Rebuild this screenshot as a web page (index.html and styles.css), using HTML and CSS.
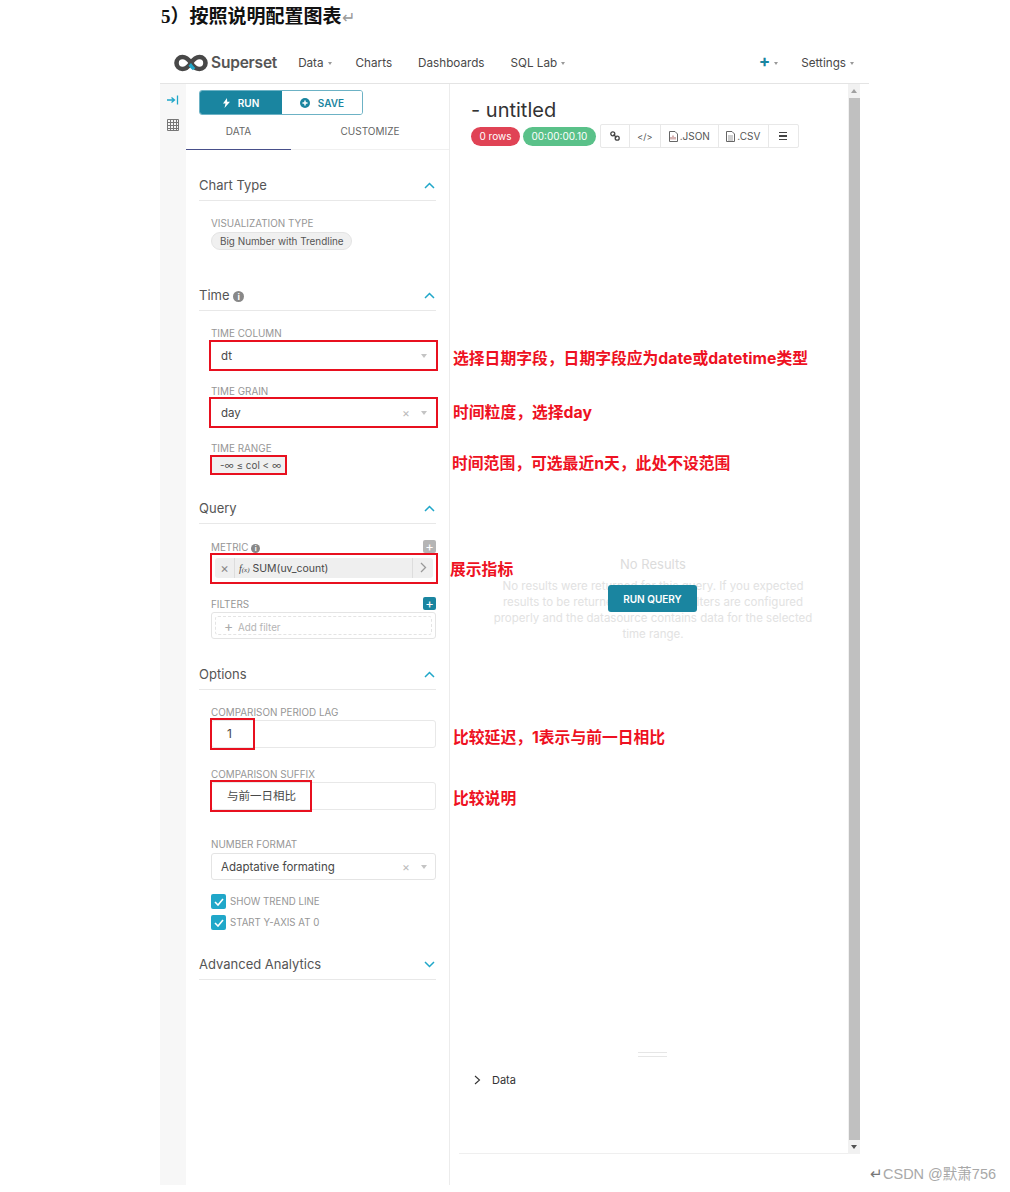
FILE: index.html
```html
<!DOCTYPE html>
<html lang="zh">
<head>
  <meta charset="UTF-8" />
  <title>按照说明配置图表</title>
  <link rel="stylesheet" href="styles.css">
</head>
<body>

  <h1 class="doc-title">5）按照说明配置图表<span class="return-mark">↵</span></h1>

  <div class="shot">
    <!-- top nav -->
    <nav class="navbar">
      <svg class="logo" width="36" height="18" viewBox="0 0 36 18">
        <path d="M18 9C15 4.500 13 3 9.500 3a6 6 0 0 0 0 12C13 15 15 13.500 18 9C21 4.500 23 3 26.500 3a6 6 0 0 1 0 12C23 15 21 13.500 18 9Z" fill="none" stroke="#484848" stroke-width="4.600"/>
        <path d="M18 9C19.500 11.200 20.800 12.800 22.300 13.900L20 16.300C18.300 15.200 17 13.700 15.500 11.800Z" fill="#20a7c9"/>
      </svg>
      <span class="brand">Superset</span>
      <a class="nav-item nav-data">Data<i class="caret"></i></a>
      <a class="nav-item">Charts</a>
      <a class="nav-item">Dashboards</a>
      <a class="nav-item">SQL Lab<i class="caret"></i></a>
      <span class="nav-space"></span>
      <a class="nav-item nav-plus"><span class="plus">+</span><i class="caret"></i></a>
      <a class="nav-item">Settings<i class="caret"></i></a>
    </nav>

    <div class="explore">
      <!-- narrow strip -->
      <aside class="strip">
        <svg width="12" height="10" viewBox="0 0 12 10"><path d="M0 5h7M4.500 2.500L7.500 5l-3 2.500M10.500 0.500v9" fill="none" stroke="#20a7c9" stroke-width="1.300"/></svg>
        <svg width="12" height="12" viewBox="0 0 12 12"><path d="M.5.500h11v11H.5zM.5 3.500h11M.5 6.500h11M.5 9.500h11M3.500.500v11M6.500.500v11M9.500.500v11" fill="none" stroke="#777" stroke-width="1"/></svg>
      </aside>

      <!-- control panel -->
      <section class="panel">
        <div class="run-save">
          <button class="btn-run">
            <svg width="7" height="10" viewBox="0 0 7 10"><path d="M4 0L0 5.500h2.500L1.500 10 7 3.800H4.200Z" fill="#fff"/></svg>
            RUN
          </button>
          <button class="btn-save">
            <svg width="10" height="10" viewBox="0 0 10 10"><circle cx="5" cy="5" r="5" fill="#1a85a0"/><path d="M2.500 5h5M5 2.500v5" stroke="#fff" stroke-width="1.500"/></svg>
            SAVE
          </button>
        </div>
        <div class="tabs">
          <div class="tab tab-active">DATA</div>
          <div class="tab">CUSTOMIZE</div>
        </div>

        <div class="section-head head-chart">Chart Type
          <svg class="chev" width="11" height="7" viewBox="0 0 11 7"><path d="M1 6l4.500-4.500L10 6" fill="none" stroke="#20a7c9" stroke-width="1.500"/></svg>
        </div>
        <div class="fields">
          <div class="label label-viz">VISUALIZATION TYPE</div>
          <span class="pill pill-viz">Big Number with Trendline</span>
        </div>

        <div class="section-head head-time">Time <i class="info info-big">i</i>
          <svg class="chev" width="11" height="7" viewBox="0 0 11 7"><path d="M1 6l4.500-4.500L10 6" fill="none" stroke="#20a7c9" stroke-width="1.500"/></svg>
        </div>
        <div class="fields">
          <div class="label label-first">TIME COLUMN</div>
          <div class="select marked">dt<i class="select-arrow"></i>
            <span class="note note-column">选择日期字段，日期字段应为date或datetime类型</span>
          </div>
          <div class="label label-next">TIME GRAIN</div>
          <div class="select marked">day<span class="select-x">×</span><i class="select-arrow"></i>
            <span class="note note-grain">时间粒度，选择day</span>
          </div>
          <div class="label label-range">TIME RANGE</div>
          <span class="pill pill-range marked">-∞ ≤ col &lt; ∞
            <span class="note note-range">时间范围，可选最近n天，此处不设范围</span>
          </span>
        </div>

        <div class="section-head head-query">Query
          <svg class="chev" width="11" height="7" viewBox="0 0 11 7"><path d="M1 6l4.500-4.500L10 6" fill="none" stroke="#20a7c9" stroke-width="1.500"/></svg>
        </div>
        <div class="fields">
          <div class="label label-add label-metric">METRIC <i class="info">i</i><span class="add add-grey">+</span></div>
          <div class="metric-box marked">
            <div class="metric">
              <span class="metric-x">×</span>
              <span class="metric-name"><em class="fx">f<small>(x)</small></em> SUM(uv_count)</span>
              <svg class="metric-go" width="7" height="11" viewBox="0 0 7 11"><path d="M1 1l4.500 4.500L1 10" fill="none" stroke="#999" stroke-width="1.300"/></svg>
            </div>
            <span class="note note-metric">展示指标</span>
          </div>
          <div class="label label-add label-filters">FILTERS<span class="add">+</span></div>
          <div class="filter-box">
            <div class="filter-inner"><span class="filter-plus">+</span> Add filter</div>
          </div>
        </div>

        <div class="section-head head-options">Options
          <svg class="chev" width="11" height="7" viewBox="0 0 11 7"><path d="M1 6l4.500-4.500L10 6" fill="none" stroke="#20a7c9" stroke-width="1.500"/></svg>
        </div>
        <div class="fields">
          <div class="label label-lag">COMPARISON PERIOD LAG</div>
          <div class="input">
            <span class="input-mark input-mark-lag">1</span>
            <span class="note note-lag">比较延迟，1表示与前一日相比</span>
          </div>
          <div class="label label-suffix">COMPARISON SUFFIX</div>
          <div class="input">
            <span class="input-mark input-mark-suffix">与前一日相比</span>
            <span class="note note-suffix">比较说明</span>
          </div>
          <div class="label label-format">NUMBER FORMAT</div>
          <div class="select">Adaptative formating<span class="select-x">×</span><i class="select-arrow"></i></div>
          <label class="check check-first"><i class="box"><svg width="10" height="8" viewBox="0 0 10 8"><path d="M1 4l3 3 5-6" fill="none" stroke="#fff" stroke-width="1.600"/></svg></i>SHOW TREND LINE</label>
          <label class="check"><i class="box"><svg width="10" height="8" viewBox="0 0 10 8"><path d="M1 4l3 3 5-6" fill="none" stroke="#fff" stroke-width="1.600"/></svg></i>START Y-AXIS AT 0</label>
        </div>

        <div class="section-head head-advanced">Advanced Analytics
          <svg class="chev" width="11" height="7" viewBox="0 0 11 7"><path d="M1 1l4.500 4.500L10 1" fill="none" stroke="#20a7c9" stroke-width="1.500"/></svg>
        </div>
      </section>

      <!-- chart side -->
      <section class="main">
        <div class="main-inner">
          <div class="chart-title">- untitled</div>
          <div class="chart-bar">
            <span class="badge badge-red">0 rows</span>
            <span class="badge badge-green">00:00:00.10</span>
            <div class="btn-group">
              <span class="bg-item bg-link">
                <svg width="10" height="10" viewBox="0 0 10 10"><circle cx="2.800" cy="2.800" r="2" fill="none" stroke="#444" stroke-width="1.300"/><circle cx="7.200" cy="7.200" r="2" fill="none" stroke="#444" stroke-width="1.300"/><path d="M3.500 3.500l3 3" stroke="#444" stroke-width="1.300"/></svg>
              </span>
              <span class="bg-item bg-code">&lt;/&gt;</span>
              <span class="bg-item bg-json">
                <svg width="9" height="11" viewBox="0 0 9 11"><path d="M.5.500h5.500l2.500 2.500v7.500h-8z" fill="none" stroke="#666"/><path d="M2 8.500V6M4 8.500V4.500M6 8.500V6" stroke="#a66" stroke-width="1"/></svg>
                .JSON</span>
              <span class="bg-item bg-csv">
                <svg width="9" height="11" viewBox="0 0 9 11"><path d="M.5.500h5.500l2.500 2.500v7.500h-8z" fill="none" stroke="#666"/><path d="M2 5h5M2 7h5M2 9h5" stroke="#888" stroke-width=".8"/></svg>
                .CSV</span>
              <span class="bg-item bg-menu"><i></i><i></i><i></i></span>
            </div>
          </div>

          <div class="empty">
            <div class="empty-title">No Results</div>
            <p class="empty-text">No results were returned for this query. If you expected results to be returned, ensure any filters are configured properly and the datasource contains data for the selected time range.</p>
            <button class="btn-query">RUN QUERY</button>
          </div>

          <div class="grip"></div>
          <div class="data-row">
            <svg width="7" height="10" viewBox="0 0 7 10"><path d="M1 1l4.500 4L1 9" fill="none" stroke="#333" stroke-width="1.100"/></svg>
            <span>Data</span>
          </div>
        </div>

        <div class="scrollbar">
          <span class="sb-arrow sb-up"></span>
          <div class="sb-thumb"></div>
          <span class="sb-arrow sb-down"></span>
        </div>
      </section>

      <div class="watermark"><span class="wm-return">↵</span>CSDN @默萧756</div>
    </div>
  </div>

</body>
</html>
```

FILE: styles.css
```css
html, body {
  margin: 0;
  padding: 0;
}
body {
  width: 1010px;
  height: 1192px;
  overflow: hidden;
  background: white;
  font-family: Inter, "Noto Sans CJK SC", sans-serif;
  color: #484848;
}
.doc-title {
  margin: 0;
  padding: 6px 0 0 161px;
  height: 42px;
  box-sizing: border-box;
  font-family: "Liberation Serif", "Noto Sans CJK SC", serif;
  font-size: 19px;
  line-height: 22px;
  font-weight: bold;
  color: #111;
}
.return-mark {
  font-weight: normal;
  font-size: 16px;
  color: #999;
}
.shot {
  margin-left: 160px;
  width: 709px;
}

/* top nav */
.navbar {
  height: 41px;
  border-bottom: 1px solid #e4e4e4;
  display: flex;
  align-items: center;
  padding-left: 13px;
  font-size: 11.700px;
  color: #484848;
}
.logo {
  margin-right: 2px;
}
.brand {
  font-size: 15.500px;
  font-weight: 600;
  color: #555;
  letter-spacing: -0.2px;
  margin-right: 21px;
}
.nav-item {
  margin-right: 26px;
  white-space: nowrap;
}
.nav-data {
  margin-right: 24px;
}
.nav-space {
  flex: 1;
}
.nav-plus {
  margin-right: 23px;
}
.plus {
  color: #1a85a0;
  font-weight: bold;
  font-size: 17px;
  line-height: 12px;
}
.caret {
  display: inline-block;
  margin-left: 4px;
  vertical-align: middle;
  border-top: 3px solid #999;
  border-left: 2.500px solid transparent;
  border-right: 2.500px solid transparent;
}
.nav-item:last-child {
  margin-right: 15px;
}

/* layout below nav */
.explore {
  display: flex;
  height: 1101px;
  position: relative;
}
.strip {
  width: 26px;
  background: #f7f7f7;
  display: flex;
  flex-direction: column;
  align-items: center;
  padding-top: 11px;
  box-sizing: border-box;
  gap: 14px;
}
.panel {
  width: 264px;
  border-right: 1px solid #ececec;
  box-sizing: border-box;
  padding: 0;
  position: relative;
}

/* run / save */
.run-save {
  display: flex;
  margin: 6px 0 0 13px;
  width: 164px;
  height: 25px;
  border: 1px solid #6cb2c5;
  border-radius: 3px;
  box-sizing: border-box;
  overflow: hidden;
}
.run-save button {
  border: none;
  font-family: inherit;
  font-size: 10px;
  font-weight: 600;
  display: flex;
  align-items: center;
  justify-content: center;
  gap: 8px;
  padding: 0;
}
.btn-run {
  width: 82px;
  background: #1a85a0;
  color: white;
}
.btn-save {
  flex: 1;
  background: white;
  color: #1a85a0;
}
.tabs {
  display: flex;
  height: 35px;
  border-bottom: 1px solid #f0f0f0;
  font-size: 10px;
  color: #666;
  box-sizing: border-box;
}
.tab {
  flex: 0 0 105px;
  text-align: center;
  line-height: 33px;
  box-sizing: border-box;
}
.tab + .tab {
  flex: 0 0 158px;
}
.tab-active {
  border-bottom: 1px solid #484f8a;
  height: 35px;
}

/* sections */
.section-head {
  margin: 0 13px;
  font-size: 13px;
  line-height: 18px;
  padding-bottom: 6px;
  border-bottom: 1px solid #e8e8e8;
  color: #555;
  position: relative;
}
.chev {
  position: absolute;
  right: 1px;
  top: 6px;
}
.head-chart { margin-top: 26px; }
.head-time { margin-top: 36px; }
.head-query { margin-top: 26px; }
.head-options { margin-top: 26px; }
.head-advanced { margin-top: 25px; }
.fields {
  margin: 0 13px 0 25px;
  position: relative;
}
.label {
  font-size: 9.900px;
  line-height: 12px;
  color: #969696;
  position: relative;
}
.label-viz { margin-top: 16px; margin-bottom: 0; }
.label-first { margin-top: 16px; margin-bottom: 3px; }
.label-next { margin-top: 16px; margin-bottom: 2px; }
.label-range { margin-top: 16px; margin-bottom: 3px; }
.label-metric { margin-top: 17px; margin-bottom: 2px; }
.label-filters { margin-top: 16px; margin-bottom: 2px; }
.label-lag { margin-top: 16px; margin-bottom: 2px; }
.label-suffix { margin-top: 20px; margin-bottom: 2px; }
.label-format { margin-top: 28px; margin-bottom: 3px; }
.add {
  position: absolute;
  right: 0;
  top: -1px;
  width: 13px;
  height: 13px;
  background: #1a85a0;
  color: white;
  border-radius: 2px;
  font-size: 13px;
  line-height: 12px;
  text-align: center;
}
.add-grey {
  background: #b5b5b5;
}
.info {
  display: inline-block;
  width: 9px;
  height: 9px;
  border-radius: 50%;
  background: #888;
  color: white;
  font-size: 7px;
  line-height: 9px;
  text-align: center;
  font-style: normal;
  font-weight: bold;
  vertical-align: 0;
}
.info-big {
  width: 11px;
  height: 11px;
  line-height: 11px;
  font-size: 9px;
}
.pill {
  display: inline-block;
  background: #f0f0f0;
  border: 1px solid #e4e4e4;
  border-radius: 9px;
  font-size: 9.900px;
  line-height: 16px;
  padding: 0 7px 0 8px;
  color: #555;
  white-space: nowrap;
}
.pill-range {
  position: relative;
  border-radius: 0;
  padding: 0 8px;
  width: 73px;
  height: 16px;
  line-height: 16px;
  box-sizing: border-box;
  border: none;
  display: block;
  margin-left: 1px;
}
.select {
  position: relative;
  height: 27px;
  border: 1px solid #e4e4e4;
  border-radius: 3px;
  box-sizing: border-box;
  padding-left: 9px;
  font-size: 11.500px;
  line-height: 26px;
  color: #484848;
}
.select-arrow {
  position: absolute;
  right: 8px;
  top: 11px;
  border-top: 4px solid #c4c4c4;
  border-left: 3.500px solid transparent;
  border-right: 3.500px solid transparent;
}
.select-x {
  position: absolute;
  right: 25px;
  top: 0;
  font-size: 12px;
  color: #bbb;
}
.marked {
  outline: 2px solid #e8101f;
  outline-offset: 0;
  border-color: transparent;
  border-radius: 0;
}
/* 标注文字 */
.note {
  position: absolute;
  left: 241px;
  top: 50%;
  transform: translateY(-50%);
  font-size: 15.800px;
  line-height: 20px;
  font-weight: bold;
  color: #ee1122;
  white-space: nowrap;
  z-index: 2;
}
.note-column { margin-top: 3px; }
.note-grain { margin-top: 0; }
.note-range { left: 240px; margin-top: -1px; }
.note-metric { left: 238px; margin-top: 1px; }
.note-lag { margin-top: 4px; }
.note-suffix { margin-top: 3px; }
.metric-box {
  position: relative;
  height: 27px;
  padding: 3px;
  box-sizing: border-box;
  margin-left: 1px;
}
.metric {
  display: flex;
  align-items: center;
  height: 20px;
  background: #efefef;
  border-radius: 3px;
  font-size: 10.500px;
  color: #484848;
}
.metric-x {
  width: 19px;
  text-align: center;
  font-size: 13px;
  color: #888;
  border-right: 1px solid #ddd;
  line-height: 20px;
}
.metric-name {
  flex: 1;
  padding-left: 4px;
}
.fx {
  font-family: "Liberation Serif", serif;
  font-size: 10px;
}
.fx small {
  font-size: 7px;
}
.metric-go {
  padding: 4px 6px 5px 7px;
  border-left: 1px solid #ddd;
}
.filter-box {
  height: 27px;
  border: 1px solid #e4e4e4;
  border-radius: 3px;
  padding: 3px 3px;
  box-sizing: border-box;
}
.filter-inner {
  height: 19px;
  border: 1px dashed #e4e4e4;
  border-radius: 3px;
  box-sizing: border-box;
  padding-left: 8px;
  font-size: 9.800px;
  line-height: 18px;
  color: #b4b4b4;
}
.filter-plus {
  font-size: 14px;
  color: #aaa;
  margin-right: 2px;
}
.input {
  position: relative;
  height: 28px;
  border: 1px solid #e8e8e8;
  border-radius: 3px;
  box-sizing: border-box;
}
.input-mark {
  position: absolute;
  left: 0;
  top: -1px;
  height: 28px;
  outline: 2px solid #e8101f;
  font-size: 12px;
  line-height: 28px;
  color: #484848;
  box-sizing: border-box;
}
.input-mark-lag {
  width: 41px;
  padding-left: 15px;
}
.input-mark-suffix {
  width: 98px;
  padding-left: 15px;
  font-size: 11.500px;
}
.check {
  display: flex;
  align-items: center;
  gap: 4px;
  font-size: 9.700px;
  color: #969696;
  height: 15px;
  margin-top: 6px;
}
.check-first {
  margin-top: 14px;
}
.box {
  width: 15px;
  height: 15px;
  background: #20a7c9;
  border-radius: 2px;
  display: flex;
  align-items: center;
  justify-content: center;
}

/* chart side */
.main {
  width: 410px;
  height: 1070px;
  display: flex;
}
.main-inner {
  width: 398px;
  position: relative;
}
.main-inner::after {
  content: "";
  position: absolute;
  left: 9px;
  right: 0;
  bottom: 0;
  height: 1px;
  background: #efefef;
}
.chart-title {
  margin: 14px 0 0 21px;
  font-size: 20px;
  line-height: 25px;
  color: #333;
}
.chart-bar {
  display: flex;
  align-items: center;
  margin: 1px 0 0 21px;
  gap: 3px;
}
.badge {
  height: 19px;
  line-height: 19px;
  border-radius: 10px;
  color: white;
  font-size: 10px;
  padding: 0 8.500px;
}
.badge-red {
  background: #e04355;
}
.badge-green {
  background: #5ac189;
}
.btn-group {
  display: flex;
  margin-left: 1px;
  height: 24px;
  border: 1px solid #e8e8e8;
  border-radius: 2px;
  box-sizing: border-box;
  font-size: 10px;
  color: #555;
}
.bg-item {
  display: flex;
  align-items: center;
  justify-content: center;
  gap: 2px;
  border-right: 1px solid #e8e8e8;
  box-sizing: border-box;
}
.bg-item:last-child {
  border-right: none;
}
.bg-link { width: 29px; }
.bg-code { width: 31px; font-size: 9px; }
.bg-json { width: 58px; }
.bg-csv { width: 50px; }
.bg-menu {
  width: 29px;
  flex-direction: column;
  gap: 2px;
}
.bg-menu i {
  display: block;
  width: 8px;
  height: 1.500px;
  background: #444;
}
.empty {
  position: relative;
  margin: 407px 0 0 33px;
  width: 340px;
  text-align: center;
}
.empty-title {
  font-size: 13px;
  line-height: 18px;
  color: #dcdcdc;
}
.empty-text {
  margin: 5px 0 0;
  font-size: 11.500px;
  line-height: 16px;
  color: #e2e2e2;
}
.btn-query {
  position: absolute;
  left: 125px;
  top: 30px;
  width: 89px;
  height: 27px;
  background: #1a85a0;
  color: white;
  border: none;
  border-radius: 3px;
  font-family: inherit;
  font-size: 10px;
  font-weight: 600;
  padding: 0;
}
.grip {
  margin: 410px 0 0 188px;
  width: 29px;
  height: 5px;
  border-top: 1px solid #e6e6e6;
  border-bottom: 1px solid #e6e6e6;
  box-sizing: border-box;
}
.data-row {
  display: flex;
  align-items: center;
  gap: 11px;
  margin: 15px 0 0 24px;
  font-size: 11px;
  line-height: 16px;
  color: #333;
}
.scrollbar {
  width: 12px;
  background: #f1f1f1;
  display: flex;
  flex-direction: column;
  align-items: center;
}
.sb-thumb {
  flex: 1;
  width: 11px;
  background: #c0c0c0;
}
.sb-arrow {
  width: 0;
  height: 0;
  border-left: 3px solid transparent;
  border-right: 3px solid transparent;
}
.sb-up {
  border-bottom: 4px solid #a0a0a0;
  margin: 5px 0 5px;
}
.sb-down {
  border-top: 4px solid #505050;
  margin: 5px 0 5px;
}
.watermark {
  position: absolute;
  left: 710px;
  top: 1081px;
  font-family: "Liberation Sans", "Noto Sans CJK SC", sans-serif;
  font-size: 14.500px;
  line-height: 18px;
  color: #a8a8a8;
  white-space: nowrap;
}
.wm-return {
  color: #777;
}
```
